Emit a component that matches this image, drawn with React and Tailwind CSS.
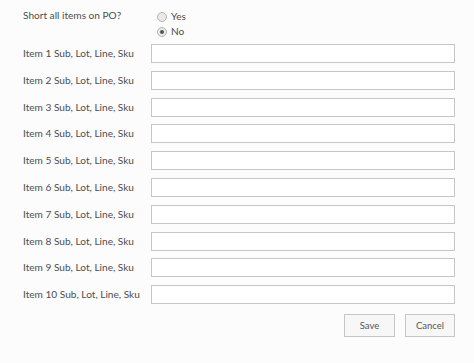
import { useState } from 'react';

const items = Array.from({ length: 10 }, (_, i) => `Item ${i + 1} Sub, Lot, Line, Sku`);

export default function App() {
    const [shortAll, setShortAll] = useState('no');

    return (
        <div className="w-[474px] h-[363px] bg-[#fcfcfc] text-[#4d4d4d] text-[10.1px] font-['Lato',sans-serif] overflow-hidden">
            <div className="pl-[23px] pt-[7px]">
                {/* Short all question */}
                <div className="flex">
                    <div className="w-[128px] pt-[1px]">Short all items on PO?</div>
                    <div className="flex flex-col pl-[6px] pt-[2px]">
                        {[['yes', 'Yes'], ['no', 'No']].map(([val, label]) => (
                            <label key={val} className="flex items-center h-[15px] gap-[4px] cursor-pointer">
                                <span className="w-[10px] h-[10px] rounded-full border border-[#b5b5b5] bg-[#e9e9e9] flex items-center justify-center">
                                    {shortAll === val && <span className="w-[4px] h-[4px] rounded-full bg-[#555]"></span>}
                                </span>
                                <input
                                    type="radio"
                                    className="hidden"
                                    checked={shortAll === val}
                                    onChange={() => setShortAll(val)}
                                />
                                <span>{label}</span>
                            </label>
                        ))}
                    </div>
                </div>

                {/* Item rows */}
                <div className="mt-[5px] flex flex-col gap-[7.8px]">
                    {items.map((label) => (
                        <div key={label} className="flex items-center h-[19px]">
                            <div className="w-[128px] whitespace-nowrap">{label}</div>
                            <input
                                type="text"
                                className="w-[304px] h-[19px] border border-[#c6c6c6] bg-white outline-none px-1"
                            />
                        </div>
                    ))}
                </div>

                {/* Buttons */}
                <div className="flex justify-end gap-[10px] mt-[10px] w-[432px]">
                    <button className="w-[51px] h-[23px] border border-[#c6c6c6] bg-[#f7f7f7] text-[#555] text-[9.5px]">
                        Save
                    </button>
                    <button className="w-[50px] h-[23px] border border-[#c6c6c6] bg-[#f7f7f7] text-[#555] text-[9.5px]">
                        Cancel
                    </button>
                </div>
            </div>
        </div>
    );
}
